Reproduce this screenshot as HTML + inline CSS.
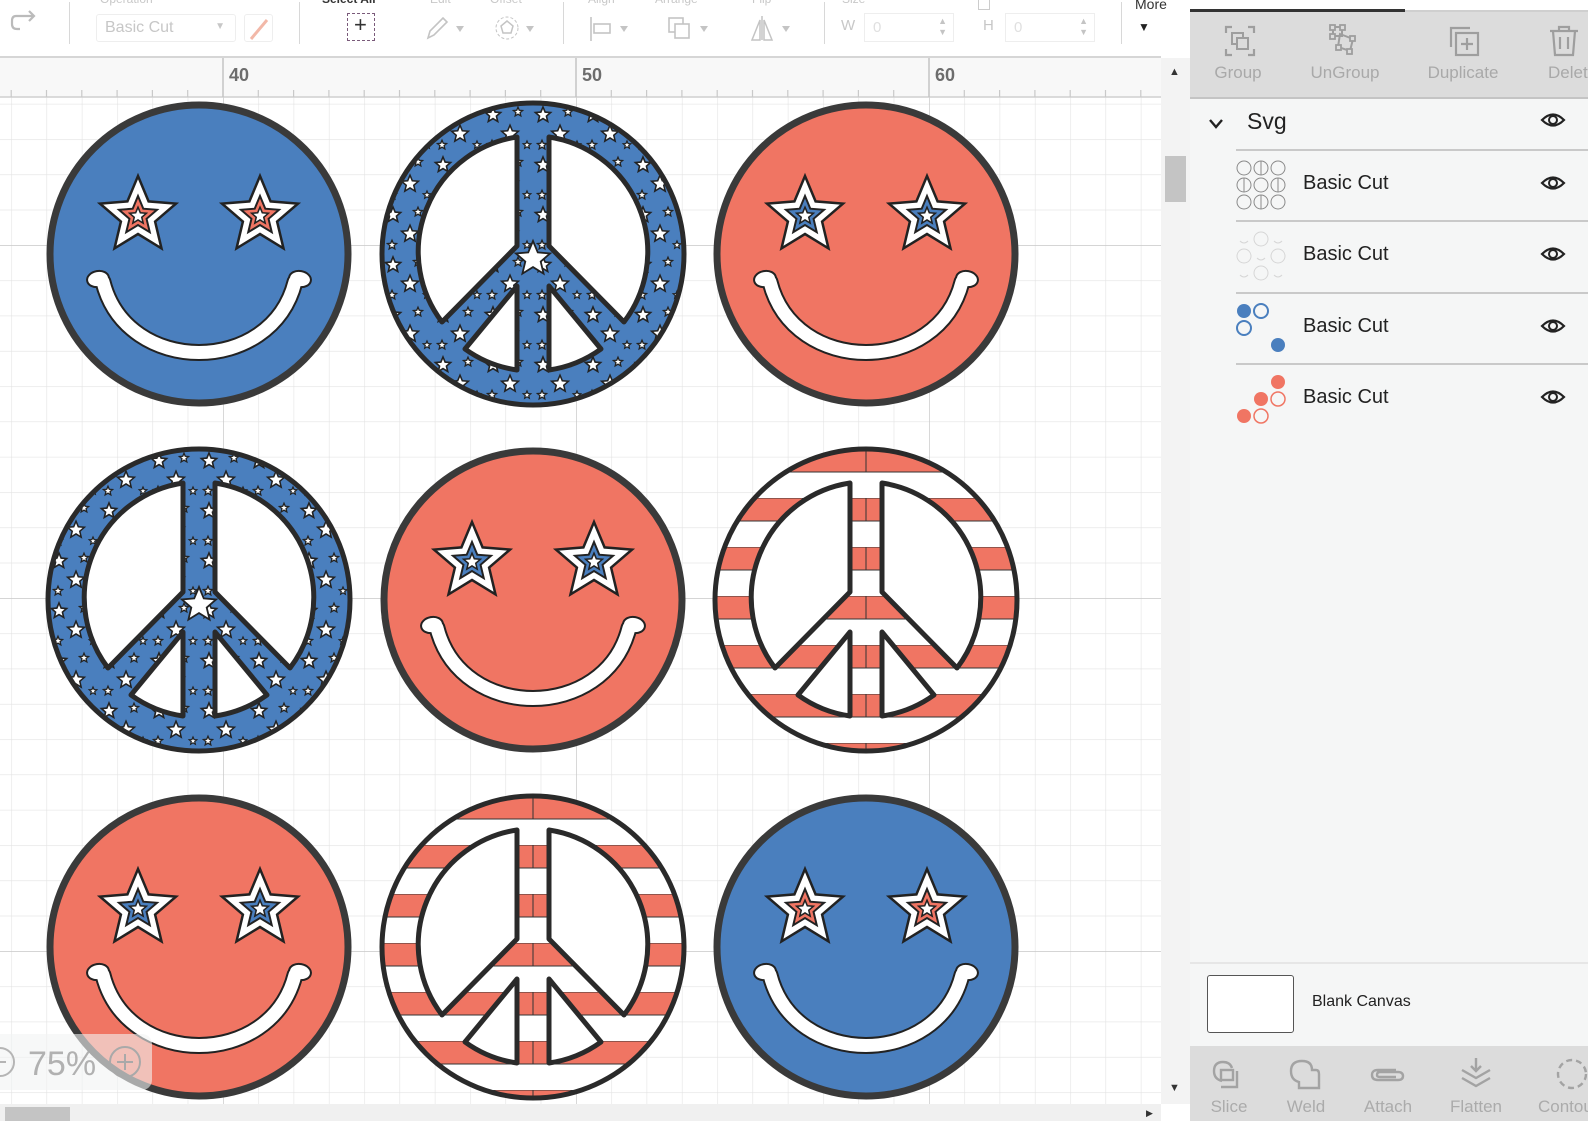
<!DOCTYPE html>
<html><head><meta charset="utf-8">
<style>
*{margin:0;padding:0;box-sizing:border-box}
body{width:1588px;height:1121px;overflow:hidden;background:#fff;font-family:"Liberation Sans",sans-serif;position:relative}
.abs{position:absolute}
.tb{left:0;top:0;width:1161px;height:58px;background:#fff;border-bottom:2px solid #d6d6d6}
.sep{position:absolute;top:2px;width:1px;height:42px;background:#d8d8d8}
.lbl{position:absolute;color:#c8c8c8;font-size:12px}
.rp{left:1190px;top:0;width:398px;height:1121px;background:#f5f6f6}
.tools{position:absolute;left:0;top:12px;width:398px;height:87px;background:#dcdcdc;border-bottom:2px solid #c4c4c4}
.tl{position:absolute;top:51px;font-size:17px;color:#a9a9a9;transform:translateX(-50%);white-space:nowrap}
.row{position:absolute;left:46px;width:352px;height:71px;border-top:2px solid #c9c9c9}
.row .t{position:absolute;left:67px;top:21px;font-size:20px;color:#222}
.eye{position:absolute}
.btl{position:absolute;top:1097px;font-size:17px;color:#ababab;transform:translateX(-50%);white-space:nowrap}
</style></head><body>

<!-- top toolbar -->
<div class="abs tb">
  <svg class="abs" style="left:10px;top:10px" width="32" height="26" viewBox="0 0 32 26"><path d="M6 6 H24 M19 1 L24 6 L19 11 M6 6 Q2 6 2 11 V14 Q2 19 7 19 H10" fill="none" stroke="#bbb" stroke-width="2.2"/></svg>
  <div class="sep" style="left:69px"></div>
  <div class="lbl" style="left:100px;top:-8px">Operation</div>
  <div class="abs" style="left:96px;top:14px;width:140px;height:28px;border:1px solid #eee;border-radius:3px;color:#c7c7c7;font-size:16px;padding:4px 8px">Basic Cut<span style="position:absolute;right:10px;top:6px;font-size:10px">▼</span></div>
  <div class="abs" style="left:244px;top:14px;width:29px;height:28px;border:1px solid #eee;border-radius:3px"><svg width="29" height="28"><line x1="6" y1="24" x2="22" y2="5" stroke="#f2b8a8" stroke-width="3"/></svg></div>
  <div class="sep" style="left:299px"></div>
  <div class="lbl" style="left:322px;top:-8px;color:#333;font-weight:bold">Select All</div>
  <div class="lbl" style="left:430px;top:-8px">Edit</div>
  <div class="lbl" style="left:490px;top:-8px">Offset</div>
  <div class="abs" style="left:347px;top:13px;width:28px;height:28px;border:1.5px dashed #7a5a7a"><div style="position:absolute;left:6px;top:-2px;font-size:22px;color:#333">+</div></div>
  <svg class="abs" style="left:424px;top:14px" width="45" height="28"><path d="M4 24 L6 17 L19 4 L23 8 L10 21 Z" fill="none" stroke="#c4c4c4" stroke-width="1.6"/><path d="M32 12 L40 12 L36 18Z" fill="#c4c4c4"/></svg>
  <svg class="abs" style="left:492px;top:12px" width="48" height="32"><circle cx="15" cy="16" r="11" fill="none" stroke="#c4c4c4" stroke-dasharray="3 2"/><path d="M15 9 L21 14 L19 21 L11 21 L9 14Z" fill="none" stroke="#c4c4c4" stroke-width="1.5"/><path d="M34 14 L42 14 L38 20Z" fill="#c4c4c4"/></svg>
  <div class="sep" style="left:563px"></div>
  <div class="lbl" style="left:588px;top:-8px">Align</div>
  <div class="lbl" style="left:655px;top:-8px">Arrange</div>
  <div class="lbl" style="left:752px;top:-8px">Flip</div>
  <svg class="abs" style="left:588px;top:14px" width="48" height="30"><line x1="3" y1="3" x2="3" y2="27" stroke="#c4c4c4" stroke-width="1.6"/><rect x="6" y="10" width="16" height="9" fill="none" stroke="#c4c4c4" stroke-width="1.6"/><path d="M32 12 L40 12 L36 18Z" fill="#c4c4c4"/></svg>
  <svg class="abs" style="left:666px;top:14px" width="48" height="30"><rect x="3" y="4" width="14" height="14" fill="none" stroke="#c4c4c4" stroke-width="1.6"/><rect x="9" y="10" width="14" height="14" fill="#fff" stroke="#c4c4c4" stroke-width="1.6"/><path d="M34 12 L42 12 L38 18Z" fill="#c4c4c4"/></svg>
  <svg class="abs" style="left:750px;top:12px" width="48" height="32"><path d="M12 4 V28 M10 8 L2 28 H10 Z M14 8 L22 28 H14Z" fill="none" stroke="#c4c4c4" stroke-width="1.5"/><path d="M32 14 L40 14 L36 20Z" fill="#c4c4c4"/></svg>
  <div class="sep" style="left:824px"></div>
  <div class="lbl" style="left:842px;top:-8px">Size</div>
  <div class="abs" style="left:841px;top:17px;font-size:15px;color:#c7c7c7">W</div>
  <div class="abs" style="left:864px;top:13px;width:90px;height:29px;border:1px solid #eee;color:#e0e0e0;font-size:15px;padding:5px 8px">0<span style="position:absolute;right:6px;top:2px;font-size:9px;line-height:11px;color:#c4c4c4">▲<br>▼</span></div>
  <div class="abs" style="left:983px;top:17px;font-size:15px;color:#c7c7c7">H</div>
  <div class="abs" style="left:1005px;top:13px;width:90px;height:29px;border:1px solid #eee;color:#e0e0e0;font-size:15px;padding:5px 8px">0<span style="position:absolute;right:6px;top:2px;font-size:9px;line-height:11px;color:#c4c4c4">▲<br>▼</span></div>
  <div class="abs" style="left:978px;top:-2px;width:12px;height:12px;border:1px solid #ccc"></div>
  <div class="sep" style="left:1121px"></div>
  <div class="abs" style="left:1135px;top:-4px;font-size:14px;color:#333">More</div>
  <div class="abs" style="left:1138px;top:20px;font-size:12px;color:#222">▼</div>
</div>

<!-- canvas -->
<svg class="abs" style="left:0;top:58px" width="1161" height="1046" viewBox="0 58 1161 1046">
<defs>
  <pattern id="gmin" patternUnits="userSpaceOnUse" x="223" y="245" width="35.3" height="35.3"><path d="M0 0 H35.3 M0 0 V35.3" stroke="#e3e3e3" stroke-width="1.2" fill="none"/></pattern>
  <pattern id="gmaj" patternUnits="userSpaceOnUse" x="223" y="245" width="353" height="353"><path d="M0 0 H353 M0 0 V353" stroke="#c9c9c9" stroke-width="1.4" fill="none"/></pattern>
  <path id="st" d="M0,-40 L10.6,-14.6 L38,-12.4 L17.1,5.6 L23.5,32.4 L0,18 L-23.5,32.4 L-17.1,5.6 L-38,-12.4 L-10.6,-14.6 Z"/>
  <pattern id="stars" patternUnits="userSpaceOnUse" x="0" y="0" width="50" height="50">
    <rect width="50" height="50" fill="#4a7fbe"/>
    <use href="#st" transform="translate(10,11) scale(0.2)" fill="#fff" stroke="#222" stroke-width="8"/>
    <use href="#st" transform="translate(35,8) scale(0.12)" fill="#fff" stroke="#222" stroke-width="11"/>
    <use href="#st" transform="translate(27,30) scale(0.22)" fill="#fff" stroke="#222" stroke-width="7"/>
    <use href="#st" transform="translate(44,41) scale(0.1)" fill="#fff" stroke="#222" stroke-width="12"/>
    <use href="#st" transform="translate(9,41) scale(0.12)" fill="#fff" stroke="#222" stroke-width="11"/>
  </pattern>
  <pattern id="stripes" patternUnits="userSpaceOnUse" x="0" y="-102" width="400" height="49">
    <rect width="400" height="49" fill="#fff"/>
    <rect width="400" height="23" fill="#f07563" stroke="#333" stroke-width="1"/>
  </pattern>
  <g id="eyeB">
    <use href="#st" fill="#fff" stroke="#222" stroke-width="2.5"/>
    <use href="#st" transform="scale(0.5)" fill="#f07563" stroke="#222" stroke-width="4"/>
    <use href="#st" transform="scale(0.22)" fill="#fff" stroke="#222" stroke-width="7"/>
  </g>
  <g id="eyeR">
    <use href="#st" fill="#fff" stroke="#222" stroke-width="2.5"/>
    <use href="#st" transform="scale(0.5)" fill="#4a7fbe" stroke="#222" stroke-width="4"/>
    <use href="#st" transform="scale(0.22)" fill="#fff" stroke="#222" stroke-width="7"/>
  </g>
  <g id="smileMouth">
    <path d="M-96,28 C-72,122 72,122 96,28" fill="none" stroke="#222" stroke-width="17" stroke-linecap="round"/>
    <ellipse cx="-101" cy="25" rx="11" ry="8" fill="#fff" stroke="#222" stroke-width="2" transform="rotate(-10 -101 25)"/>
    <ellipse cx="101" cy="25" rx="11" ry="8" fill="#fff" stroke="#222" stroke-width="2" transform="rotate(10 101 25)"/>
    <path d="M-96,28 C-72,122 72,122 96,28" fill="none" stroke="#fff" stroke-width="13" stroke-linecap="round"/>
  </g>
  <g id="smB">
    <circle r="149" fill="#4a7fbe" stroke="#3a3a3a" stroke-width="7"/>
    <use href="#eyeB" x="-61" y="-38"/><use href="#eyeB" x="61" y="-38"/>
    <use href="#smileMouth"/>
  </g>
  <g id="smR">
    <circle r="149" fill="#f07563" stroke="#3a3a3a" stroke-width="7"/>
    <use href="#eyeR" x="-61" y="-38"/><use href="#eyeR" x="61" y="-38"/>
    <use href="#smileMouth"/>
  </g>
  <g id="holes" fill="#fff" stroke="#2a2a2a" stroke-width="5" stroke-linejoin="round">
    <path d="M-16,-117 L-16,-8 L-91,68 A116,116 0 0 1 -16,-117 Z"/>
    <path d="M-16,32 L-16,116 A117,117 0 0 1 -68,95 Z"/>
    <g transform="scale(-1,1)">
      <path d="M-16,-117 L-16,-8 L-91,68 A116,116 0 0 1 -16,-117 Z"/>
      <path d="M-16,32 L-16,116 A117,117 0 0 1 -68,95 Z"/>
    </g>
  </g>
  <g id="peaceS">
    <circle r="151" fill="url(#stars)" stroke="#2a2a2a" stroke-width="5"/>
    <use href="#holes"/>
    <use href="#st" transform="translate(0,5) scale(0.45)" fill="#fff" stroke="#222" stroke-width="4"/>
  </g>
  <g id="peaceR">
    <circle r="151" fill="url(#stripes)" stroke="#2a2a2a" stroke-width="5"/>
    <use href="#holes"/>
  </g>
</defs>
<rect x="0" y="58" width="1161" height="1046" fill="#fff"/>
<rect x="0" y="97" width="1161" height="1007" fill="url(#gmin)"/>
<rect x="0" y="97" width="1161" height="1007" fill="url(#gmaj)"/>
<rect x="0" y="58" width="1161" height="39" fill="#f8f8f8"/>
<line x1="0" y1="97" x2="1161" y2="97" stroke="#cfcfcf" stroke-width="1.5"/>
<g stroke="#c9c9c9" stroke-width="1.2">
<path d="M11.2 90V97M46.5 90V97M81.8 90V97M117.1 90V97M152.4 90V97M187.7 90V97M258.3 90V97M293.6 90V97M328.9 90V97M364.2 90V97M399.5 90V97M434.8 90V97M470.1 90V97M505.4 90V97M540.7 90V97M611.3 90V97M646.6 90V97M681.9 90V97M717.2 90V97M752.5 90V97M787.8 90V97M823.1 90V97M858.4 90V97M893.7 90V97M964.3 90V97M999.6 90V97M1034.9 90V97M1070.2 90V97M1105.5 90V97M1140.8 90V97"/>
<path d="M223 58V97M576 58V97M929 58V97" stroke="#c4c4c4" stroke-width="1.5"/>
</g>
<g font-family="Liberation Sans" font-size="18" font-weight="bold" fill="#6d6d6d">
<text x="229" y="81">40</text><text x="582" y="81">50</text><text x="935" y="81">60</text>
</g>
<use href="#smB" transform="translate(199,254)"/>
<use href="#peaceS" transform="translate(533,254)"/>
<use href="#smR" transform="translate(866,254)"/>
<use href="#peaceS" transform="translate(199,600)"/>
<use href="#smR" transform="translate(533,600)"/>
<use href="#peaceR" transform="translate(866,600)"/>
<use href="#smR" transform="translate(199,947)"/>
<use href="#peaceR" transform="translate(533,947)"/>
<use href="#smB" transform="translate(866,947)"/>
<rect x="-10" y="1034" width="162" height="56" rx="10" fill="#f2f3f3" fill-opacity="0.6"/>
<circle cx="0" cy="1062" r="14" fill="none" stroke="#b5b5b5" stroke-width="2"/>
<line x1="-6" y1="1062" x2="6" y2="1062" stroke="#b5b5b5" stroke-width="2"/>
<text x="28" y="1075" font-family="Liberation Sans" font-size="34" fill="#a9a9a9" fill-opacity="0.9">75%</text>
<circle cx="125" cy="1062" r="15" fill="none" stroke="#a9a9a9" stroke-width="2"/>
<path d="M117 1062H133M125 1054V1070" stroke="#a9a9a9" stroke-width="2"/>
</svg>

<div class="abs" style="left:1161px;top:58px;width:29px;height:1046px;background:#f3f3f3"></div>
<div class="abs" style="left:1169px;top:66px;font-size:11px;color:#333">▲</div>
<div class="abs" style="left:1165px;top:156px;width:21px;height:46px;background:#c4c4c4"></div>
<div class="abs" style="left:1169px;top:1082px;font-size:11px;color:#333">▼</div>
<div class="abs" style="left:0;top:1104px;width:1161px;height:17px;background:#f0f0f0"></div>
<div class="abs" style="left:5px;top:1107px;width:65px;height:14px;background:#c4c4c4"></div>
<div class="abs" style="left:1146px;top:1108px;font-size:9px;color:#333">▶</div>

<div class="abs rp">
  <div class="abs" style="left:0;top:0;width:398px;height:12px;background:#fff;border-bottom:2px solid #cfcfcf"></div>
  <div class="abs" style="left:0;top:9px;width:215px;height:3px;background:#333"></div>
  <div class="tools">
    <svg class="abs" style="left:34px;top:13px" width="32" height="32"><path d="M2 8V2H8M24 2H30V8M30 24V30H24M8 30H2V24" fill="none" stroke="#9e9e9e" stroke-width="2.2"/><rect x="8" y="8" width="11" height="11" fill="none" stroke="#9e9e9e" stroke-width="2"/><rect x="13" y="13" width="11" height="11" fill="#dcdcdc" stroke="#9e9e9e" stroke-width="2"/></svg>
    <svg class="abs" style="left:138px;top:11px" width="34" height="34"><path d="M5 4H14V13H5ZM12 11L25 16L22 28L10 24Z" fill="none" stroke="#9e9e9e" stroke-width="2"/><g fill="#dcdcdc" stroke="#9e9e9e" stroke-width="1.8"><rect x="2" y="2" width="5" height="5"/><rect x="12" y="2" width="5" height="5"/><rect x="2" y="11" width="5" height="5"/><rect x="22" y="13" width="5" height="5"/><rect x="19" y="26" width="5" height="5"/><rect x="8" y="22" width="5" height="5"/></g></svg>
    <svg class="abs" style="left:258px;top:13px" width="32" height="32"><path d="M3 22V3H22" fill="none" stroke="#9e9e9e" stroke-width="2.2"/><rect x="8" y="8" width="22" height="22" fill="none" stroke="#9e9e9e" stroke-width="2.2"/><path d="M19 13V25M13 19H25" stroke="#9e9e9e" stroke-width="2.2"/></svg>
    <svg class="abs" style="left:358px;top:13px" width="40" height="32"><path d="M2 6H30M11 6V2H21V6M5 6L7 30H25L27 6M12 12V24M20 12V24" fill="none" stroke="#9e9e9e" stroke-width="2.2"/></svg>
    <div class="tl" style="left:48px">Group</div>
    <div class="tl" style="left:155px">UnGroup</div>
    <div class="tl" style="left:273px">Duplicate</div>
    <div class="tl" style="left:358px;transform:none">Delete</div>
  </div>
  <svg class="abs" style="left:18px;top:118px" width="16" height="12"><path d="M2 2L8 9L14 2" fill="none" stroke="#222" stroke-width="2.4"/></svg>
  <div class="abs" style="left:57px;top:108px;font-size:23px;color:#222">Svg</div>
  <svg class="eye" style="left:350px;top:110px" width="26" height="20" viewBox="0 0 26 20"><path d="M2 10Q13 -1 24 10Q13 21 2 10Z" fill="none" stroke="#222" stroke-width="2.2"/><circle cx="13" cy="10" r="4" fill="none" stroke="#222" stroke-width="2"/></svg>

  <div class="row" style="top:149px"><svg class="abs" style="left:0;top:9px" width="50" height="50"><g fill="none" stroke="#8a8a8a" stroke-width="1"><circle cx="8" cy="8" r="7"/><circle cx="25" cy="8" r="7"/><circle cx="42" cy="8" r="7"/><circle cx="8" cy="25" r="7"/><circle cx="25" cy="25" r="7"/><circle cx="42" cy="25" r="7"/><circle cx="8" cy="42" r="7"/><circle cx="25" cy="42" r="7"/><circle cx="42" cy="42" r="7"/><path d="M25 1V15M8 18V32M42 18V32M25 35V49"/></g></svg><div class="t">Basic Cut</div><svg class="eye" style="left:304px;top:22px" width="26" height="20" viewBox="0 0 26 20"><path d="M2 10Q13 -1 24 10Q13 21 2 10Z" fill="none" stroke="#222" stroke-width="2.2"/><circle cx="13" cy="10" r="4" fill="none" stroke="#222" stroke-width="2"/></svg></div>
  <div class="row" style="top:220px"><svg class="abs" style="left:0;top:9px" width="50" height="50"><g fill="none" stroke="#d6d6d6" stroke-width="1"><circle cx="25" cy="8" r="7"/><circle cx="8" cy="25" r="7"/><circle cx="42" cy="25" r="7"/><circle cx="25" cy="42" r="7"/><path d="M4 10Q8 14 12 10M38 10Q42 14 46 10M21 27Q25 31 29 27M4 44Q8 48 12 44M38 44Q42 48 46 44"/></g></svg><div class="t">Basic Cut</div><svg class="eye" style="left:304px;top:22px" width="26" height="20" viewBox="0 0 26 20"><path d="M2 10Q13 -1 24 10Q13 21 2 10Z" fill="none" stroke="#222" stroke-width="2.2"/><circle cx="13" cy="10" r="4" fill="none" stroke="#222" stroke-width="2"/></svg></div>
  <div class="row" style="top:292px"><svg class="abs" style="left:0;top:9px" width="50" height="50"><circle cx="8" cy="8" r="7" fill="#4a7fbe"/><circle cx="25" cy="8" r="7" fill="none" stroke="#4a7fbe" stroke-width="2"/><circle cx="8" cy="25" r="7" fill="none" stroke="#4a7fbe" stroke-width="2"/><circle cx="42" cy="42" r="7" fill="#4a7fbe"/></svg><div class="t">Basic Cut</div><svg class="eye" style="left:304px;top:22px" width="26" height="20" viewBox="0 0 26 20"><path d="M2 10Q13 -1 24 10Q13 21 2 10Z" fill="none" stroke="#222" stroke-width="2.2"/><circle cx="13" cy="10" r="4" fill="none" stroke="#222" stroke-width="2"/></svg></div>
  <div class="row" style="top:363px"><svg class="abs" style="left:0;top:9px" width="50" height="50"><circle cx="42" cy="8" r="7" fill="#f07563"/><circle cx="25" cy="25" r="7" fill="#f07563"/><circle cx="42" cy="25" r="7" fill="none" stroke="#f07563" stroke-width="1.5"/><circle cx="8" cy="42" r="7" fill="#f07563"/><circle cx="25" cy="42" r="7" fill="none" stroke="#f07563" stroke-width="1.5"/></svg><div class="t">Basic Cut</div><svg class="eye" style="left:304px;top:22px" width="26" height="20" viewBox="0 0 26 20"><path d="M2 10Q13 -1 24 10Q13 21 2 10Z" fill="none" stroke="#222" stroke-width="2.2"/><circle cx="13" cy="10" r="4" fill="none" stroke="#222" stroke-width="2"/></svg></div>

  <div class="abs" style="left:0;top:962px;width:398px;height:2px;background:#e6e6e6"></div>
  <div class="abs" style="left:17px;top:975px;width:87px;height:58px;background:#fff;border:1.5px solid #555;border-radius:3px"></div>
  <div class="abs" style="left:122px;top:993px;font-size:16px;color:#222">Blank Canvas</div>
  <div class="abs" style="left:0;top:1046px;width:398px;height:75px;background:#dcdcdc"></div>
  <svg class="abs" style="left:22px;top:1059px" width="34" height="32"><path d="M10 22Q2 20 2 12Q2 3 11 3Q18 3 20 9" fill="none" stroke="#a3a3a3" stroke-width="2.4"/><rect x="9" y="11" width="12" height="10" fill="none" stroke="#a3a3a3" stroke-width="2.4"/><path d="M25 12V28H9" fill="none" stroke="#a3a3a3" stroke-width="2.4"/></svg>
  <svg class="abs" style="left:99px;top:1058px" width="34" height="34"><path d="M10 24Q2 22 2 13Q2 3 13 3Q23 3 23 12H27Q30 12 30 16V30H10Z" fill="none" stroke="#a3a3a3" stroke-width="2.4"/></svg>
  <svg class="abs" style="left:180px;top:1064px" width="36" height="22"><path d="M26 6H8Q2 6 2 11Q2 16 8 16H28Q33 16 33 12Q33 8 28 8H10Q7 8 7 11Q7 13 10 13H26" fill="none" stroke="#a3a3a3" stroke-width="2.4"/></svg>
  <svg class="abs" style="left:269px;top:1056px" width="34" height="36"><path d="M17 2V14M12 10L17 15L22 10M3 14L17 22L31 14M3 22L17 30L31 22" fill="none" stroke="#a3a3a3" stroke-width="2.4"/></svg>
  <svg class="abs" style="left:364px;top:1057px" width="36" height="34"><circle cx="18" cy="17" r="14" fill="none" stroke="#a3a3a3" stroke-width="2.4" stroke-dasharray="6 4"/></svg>
</div>
<div class="btl" style="left:1229px">Slice</div>
<div class="btl" style="left:1306px">Weld</div>
<div class="btl" style="left:1388px">Attach</div>
<div class="btl" style="left:1476px">Flatten</div>
<div class="btl" style="left:1538px;transform:none">Contour</div>
</body></html>
